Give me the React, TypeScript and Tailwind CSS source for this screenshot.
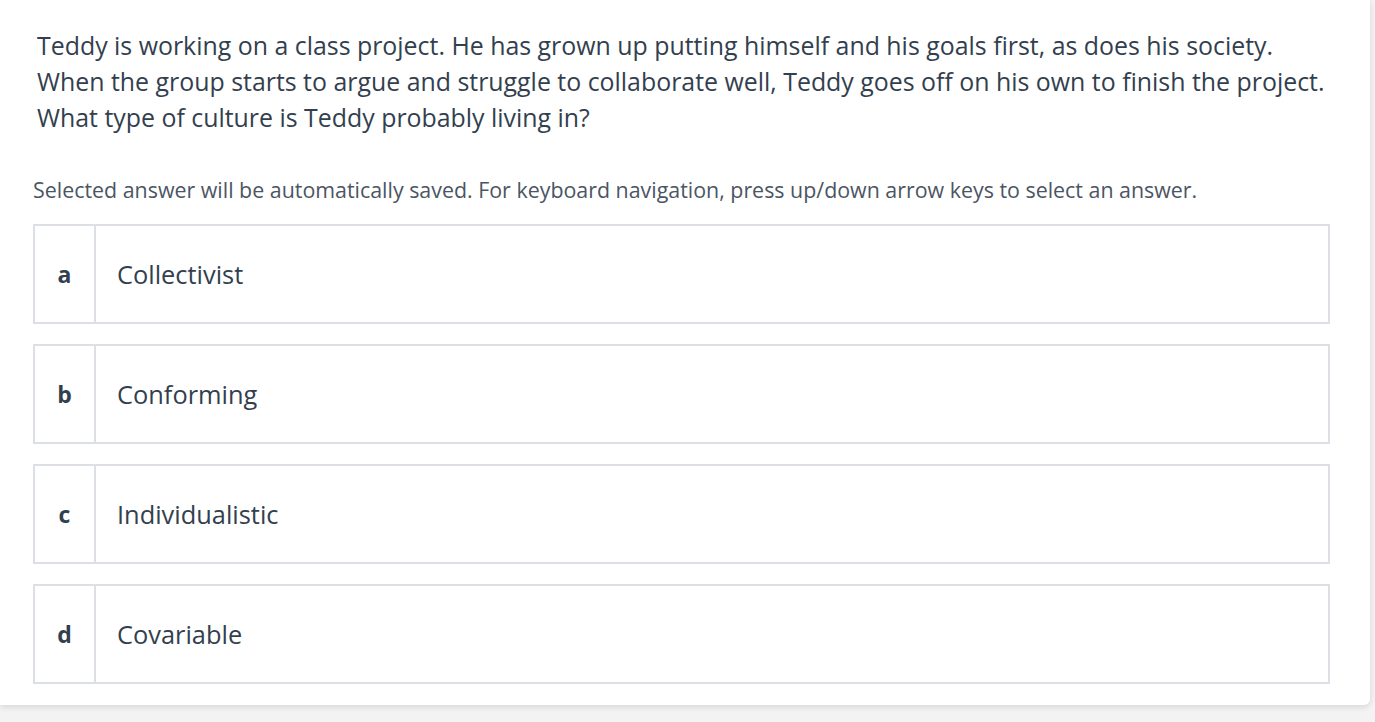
import React from 'react';

const options = [
  { key: 'a', label: 'Collectivist' },
  { key: 'b', label: 'Conforming' },
  { key: 'c', label: 'Individualistic' },
  { key: 'd', label: 'Covariable' },
];

const App: React.FC = () => {
  return (
    <div className="h-[722px] w-full overflow-hidden bg-[#f3f3f3] font-['Open_Sans',sans-serif]">
      <div className="w-[1370px] rounded-br-md bg-white pb-[21px] pl-[33px] pr-[40px] pt-[27px] shadow-[0_2px_6px_rgba(0,0,0,0.12)]">
        <p className="pl-[4px] text-[24.9px] leading-[36px] text-[#333f4e]">
          Teddy is working on a class project. He has grown up putting himself and his goals first, as does his society.
          <br />
          When the group starts to argue and struggle to collaborate well, Teddy goes off on his own to finish the project.
          <br />
          What type of culture is Teddy probably living in?
        </p>

        <p className="mt-[41px] text-[21.4px] leading-[28px] text-[#4b5563]">
          Selected answer will be automatically saved. For keyboard navigation, press up/down arrow keys to select an answer.
        </p>

        <div className="mt-[20px] flex flex-col gap-[20px]">
          {options.map((opt) => (
            <div key={opt.key} className="flex h-[100px] w-[1297px] border-2 border-[#dcdfe3] bg-white">
              <div className="flex w-[61px] items-center justify-center border-r-2 border-[#dcdfe3] text-[23px] font-bold text-[#333f4e]">
                {opt.key}
              </div>
              <div className="flex items-center pl-[21px] text-[25.4px] text-[#333f4e]">{opt.label}</div>
            </div>
          ))}
        </div>
      </div>
    </div>
  );
};

export default App;
